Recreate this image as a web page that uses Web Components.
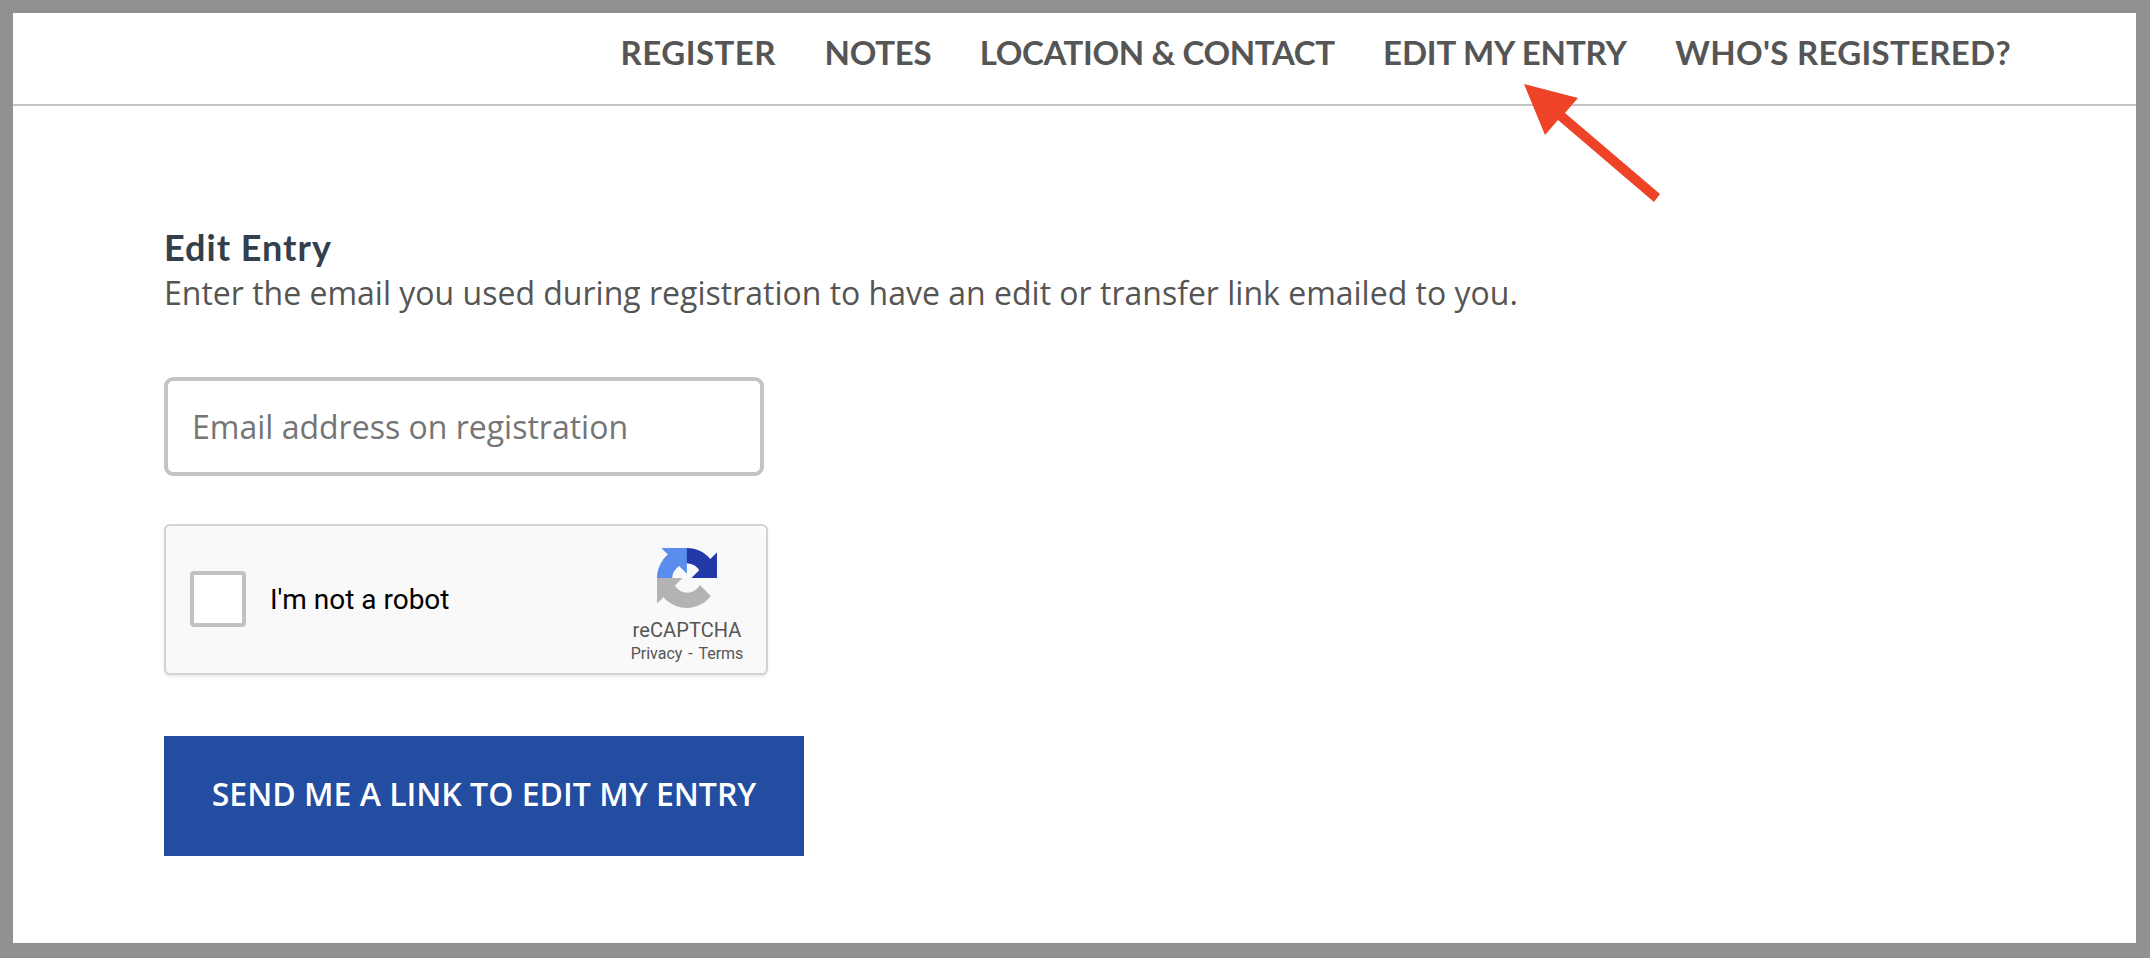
<!DOCTYPE html>
<html>
<head>
<meta charset="utf-8">
<title>Edit Entry</title>
<style>
  html, body { margin: 0; height: 100%; background: #fff; }
</style>
</head>
<body>
<page-frame>
  <site-nav>
    <nav-link style="letter-spacing:.5px">REGISTER</nav-link>
    <nav-link style="letter-spacing:-.3px">NOTES</nav-link>
    <nav-link style="letter-spacing:-.38px">LOCATION &amp; CONTACT</nav-link>
    <nav-link style="letter-spacing:-.15px">EDIT MY ENTRY</nav-link>
    <nav-link style="letter-spacing:.3px">WHO'S REGISTERED?</nav-link>
  </site-nav>
  <edit-entry></edit-entry>
  <callout-arrow></callout-arrow>
</page-frame>

<script>
class PageFrame extends HTMLElement {
  constructor() {
    super();
    this.attachShadow({ mode: "open" });
    this.shadowRoot.innerHTML = `
      <style>
        :host {
          display: block;
          position: relative;
          box-sizing: border-box;
          width: 2150px;
          height: 958px;
          border: solid #919191;
          border-width: 13px 14px 15px 13px;
          background: #fff;
          overflow: hidden;
        }
      </style>
      <slot></slot>`;
  }
}

class SiteNav extends HTMLElement {
  constructor() {
    super();
    this.attachShadow({ mode: "open" });
    this.shadowRoot.innerHTML = `
      <style>
        :host {
          display: flex;
          justify-content: flex-end;
          align-items: center;
          gap: 48.5px;
          box-sizing: border-box;
          height: 93px;
          padding: 0 125px 13px 0;
          border-bottom: 2px solid #c4c4c4;
        }
      </style>
      <slot></slot>`;
  }
}

class NavLink extends HTMLElement {
  constructor() {
    super();
    this.attachShadow({ mode: "open" });
    this.shadowRoot.innerHTML = `
      <style>
        :host {
          display: block;
          font: 700 33px "Lato", sans-serif;
          color: #555;
          white-space: nowrap;
        }
      </style>
      <slot></slot>`;
  }
}

class RecaptchaBox extends HTMLElement {
  constructor() {
    super();
    this.attachShadow({ mode: "open" });
    this.shadowRoot.innerHTML = `
      <style>
        :host {
          display: flex;
          align-items: center;
          box-sizing: border-box;
          width: 604px;
          height: 151px;
          padding: 0 22px 0 24px;
          background: #f9f9f9;
          border: 2px solid #d3d3d3;
          border-radius: 6px;
          box-shadow: 0 2px 3px rgba(0, 0, 0, .08);
          font-family: "Roboto", sans-serif;
        }
        .check {
          box-sizing: border-box;
          width: 56px;
          height: 56px;
          margin-bottom: 2px;
          background: #fff;
          border: 4px solid #c1c1c1;
          border-radius: 4px;
        }
        .label { margin-left: 24px; font-size: 28px; color: #000; flex: 1; }
        .brand { display: flex; flex-direction: column; align-items: center; color: #555; width: 114px; padding-top: 12px; }
        .brand svg { width: 60px; height: 60px; display: block; }
        .name { font-size: 20px; line-height: 24px; margin-top: 10px; letter-spacing: .1px; }
        .links { font-size: 16px; line-height: 20px; margin-top: 2px; white-space: nowrap; word-spacing: 2px; }
      </style>
      <div class="check"></div>
      <div class="label">I'm not a robot</div>
      <div class="brand">
        <svg viewBox="0 0 64 64">
          <path d="M64 31.955l-.033-1.37V4.687l-7.16 7.16C50.948 4.674 42.033.093 32.05.093c-10.4 0-19.622 4.96-25.458 12.64l11.736 11.86a15.55 15.55 0 0 1 4.754-5.334c2.05-1.6 4.952-2.906 8.968-2.906.485 0 .86.057 1.135.163 4.976.393 9.288 3.14 11.828 7.124l-8.307 8.307 26.2.002" fill="#2339a8"/>
          <path d="M31.862.094l-1.37.033H4.594l7.16 7.16C4.58 13.147 0 22.06 0 32.046c0 10.4 4.96 19.622 12.64 25.458l11.86-11.736a15.55 15.55 0 0 1-5.334-4.754c-1.6-2.05-2.906-4.952-2.906-8.968 0-.485.057-.86.163-1.135.393-4.976 3.14-9.288 7.124-11.828l8.307 8.307.002-26.2" fill="#5a8dee"/>
          <path d="M.001 32.045l.033 1.37v25.898l7.16-7.16c5.86 7.173 14.774 11.754 24.76 11.754 10.4 0 19.622-4.96 25.458-12.64l-11.736-11.86a15.55 15.55 0 0 1-4.754 5.334c-2.05 1.6-4.952 2.906-8.968 2.906-.485 0-.86-.057-1.135-.163-4.976-.393-9.288-3.14-11.828-7.124l8.307-8.307-26.2-.002" fill="#b3b3b3"/>
        </svg>
        <div class="name">reCAPTCHA</div>
        <div class="links">Privacy - Terms</div>
      </div>`;
  }
}

class EditEntry extends HTMLElement {
  constructor() {
    super();
    this.attachShadow({ mode: "open" });
    this.shadowRoot.innerHTML = `
      <style>
        :host {
          display: flex;
          flex-direction: column;
          align-items: flex-start;
          padding: 118px 0 0 151px;
          font-family: "Open Sans", sans-serif;
        }
        h2 {
          margin: 0;
          font: 700 36px/46px "Lato", sans-serif;
          letter-spacing: 1px;
          color: #333f4c;
        }
        p {
          margin: 0;
          font-size: 32px;
          line-height: 46px;
          color: #555;
          white-space: nowrap;
        }
        .email {
          box-sizing: border-box;
          width: 600px;
          height: 99px;
          margin-top: 61px;
          padding-left: 24px;
          display: flex;
          align-items: center;
          border: 4px solid #c4c4c4;
          border-radius: 9px;
          font-size: 32px;
          color: #757575;
        }
        recaptcha-box { margin-top: 48px; }
        .send {
          box-sizing: border-box;
          margin-top: 61px;
          width: 640px;
          height: 120px;
          padding-bottom: 5px;
          display: flex;
          align-items: center;
          justify-content: center;
          background: #234da0;
          color: #fff;
          font-size: 32px;
          font-weight: 600;
        }
      </style>
      <h2>Edit Entry</h2>
      <p>Enter the email you used during registration to have an edit or transfer link emailed to you.</p>
      <div class="email">Email address on registration</div>
      <recaptcha-box></recaptcha-box>
      <div class="send">SEND ME A LINK TO EDIT MY ENTRY</div>`;
  }
}

// annotation drawn over the nav, coordinates are relative to the white area
class CalloutArrow extends HTMLElement {
  constructor() {
    super();
    this.attachShadow({ mode: "open" });
    this.shadowRoot.innerHTML = `
      <style>
        :host { position: absolute; left: 0; top: 0; width: 100%; height: 100%; pointer-events: none; }
        svg { width: 100%; height: 100%; display: block; }
      </style>
      <svg viewBox="13 13 2123 930">
        <polygon points="1524,84 1578,98 1565,113 1660,194 1654,202 1558,120 1545,135" fill="#ee4326"/>
      </svg>`;
  }
}

customElements.define("page-frame", PageFrame);
customElements.define("site-nav", SiteNav);
customElements.define("nav-link", NavLink);
customElements.define("recaptcha-box", RecaptchaBox);
customElements.define("edit-entry", EditEntry);
customElements.define("callout-arrow", CalloutArrow);
</script>
</body>
</html>
